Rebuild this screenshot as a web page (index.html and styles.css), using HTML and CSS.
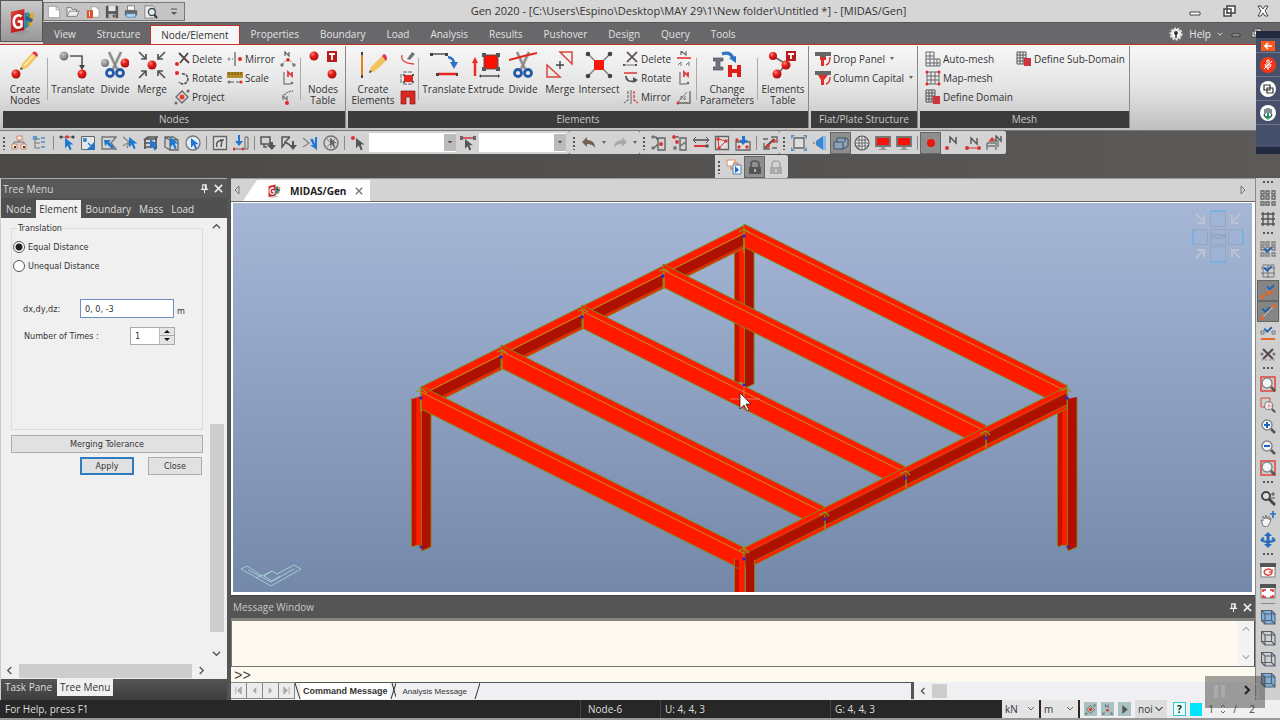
FILE: index.html
```html
<!DOCTYPE html>
<html lang="en">
<head>
<meta charset="utf-8">
<title>Gen 2020</title>
<link rel="stylesheet" href="styles.css">
</head>
<body>
<svg class="defs" aria-hidden="true">
  <defs>
    <radialGradient id="ball" cx="35%" cy="30%" r="75%"><stop offset="0" stop-color="#ff8a80"/><stop offset=".4" stop-color="#e8201c"/><stop offset="1" stop-color="#a30d0d"/></radialGradient>
    <radialGradient id="gball" cx="35%" cy="30%" r="75%"><stop offset="0" stop-color="#c8c8c8"/><stop offset="1" stop-color="#686868"/></radialGradient>
    <linearGradient id="logoRed" x1="0" y1="0" x2="1" y2="1"><stop offset="0" stop-color="#e9423a"/><stop offset="1" stop-color="#a80f12"/></linearGradient>
  </defs>

  <symbol id="logo" viewBox="0 0 28 28">
    <path d="M3 4 17 1 17 23 3 26Z" fill="url(#logoRed)"/>
    <path d="M17 5 20 5 20 20 17 22Z" fill="#2c7fb8"/><path d="M20 4 23 6 22 19 20 20Z" fill="#3f9b4f"/><path d="M23 6 27 5 25 18 22 20Z" fill="#e3a32b"/>
    <path d="M19 8 26 12 24 15 18 12Z" fill="#2b5d8f"/>
    <path d="M3 26 17 23 24 25 10 28Z" fill="#8d8d8d" opacity=".5"/>
    <path d="M14 9C11 6 6 8 6 14s4 8 8 5v-5h-4" fill="none" stroke="#fff" stroke-width="2.6"/>
  </symbol>
  <symbol id="new" viewBox="0 0 16 16"><path d="M1.500 1.500h9l4 4v9h-13z" fill="#fff" stroke="#999"/><path d="M10.500 1.500v4h4" fill="none" stroke="#999"/></symbol>
  <symbol id="open" viewBox="0 0 16 16"><path d="M1 13V3h5l1 2h5v3M1 13l3-6h11l-3 6z" fill="#eee" stroke="#777"/></symbol>
  <symbol id="newred" viewBox="0 0 16 16"><path d="M6 2h5l4 4v8H6z" fill="#fff" stroke="#999"/><path d="M1 6h7v9H1z" fill="#e2502a"/><path d="M4 8v5M3 8h1" stroke="#fff"/></symbol>
  <symbol id="save" viewBox="0 0 16 16"><path d="M1 1h14v14H1z" fill="#565656"/><path d="M4 1h8v6H4z" fill="#e6e6e6"/><path d="M4 10h8v5H4z" fill="#bbb"/><path d="M9 11h2v3H9z" fill="#444"/></symbol>
  <symbol id="print" viewBox="0 0 16 16"><path d="M4 1h8v5H4z" fill="#fff" stroke="#777"/><path d="M1 6h14v6H1z" fill="#666"/><path d="M3 10h10v4H3z" fill="#b9d7ef" stroke="#4a8fc6"/></symbol>
  <symbol id="preview" viewBox="0 0 16 16"><path d="M1 1h9l2 2v12H1z" fill="#eee" stroke="#777"/><circle cx="9" cy="8" r="4" fill="#dfeaf2" stroke="#444" stroke-width="1.500"/><path d="m12 11 3 4" stroke="#333" stroke-width="2"/></symbol>

  <symbol id="pencil" viewBox="0 0 28 28"><circle cx="5" cy="23" r="4.500" fill="url(#ball)"/><path d="M9 19 11 13 21 2 26 6 16 17Z" fill="#f3c35d"/><path d="M13 15 23 4" stroke="#fbe5ab" stroke-width="2"/><path d="m21 2 2-1.500q3 0 4 4L26 6Z" fill="#df3548"/><path d="m9 19 1-3 2 2z" fill="#444"/></symbol>
  <symbol id="translate" viewBox="0 0 28 28"><circle cx="5" cy="5" r="4.500" fill="url(#gball)"/><path d="M11 5h12v10" fill="none" stroke="#555" stroke-width="1.600"/><path d="m20 14 3 5 3-5z" fill="#444"/><circle cx="23" cy="23" r="4.500" fill="url(#ball)"/></symbol>
  <symbol id="scissors" viewBox="0 0 28 28"><path d="M8 1 16 18M20 1 12 18" stroke="#aaa" stroke-width="3"/><path d="M8 1 16 18M20 1 12 18" stroke="#666" stroke-width=".7"/><circle cx="9" cy="22" r="3.500" fill="none" stroke="#245aa5" stroke-width="2.800"/><circle cx="19" cy="22" r="3.500" fill="none" stroke="#245aa5" stroke-width="2.800"/></symbol>
  <symbol id="divide" viewBox="0 0 28 28"><use href="#scissors"/><circle cx="4" cy="12" r="4" fill="url(#gball)"/><circle cx="24" cy="12" r="4.500" fill="url(#ball)"/></symbol>
  <symbol id="edivide" viewBox="0 0 28 28"><use href="#scissors"/><path d="M0 9 15 5 28 2" stroke="#e5261f" stroke-width="2"/></symbol>
  <symbol id="merge" viewBox="0 0 28 28"><g fill="none" stroke="#555" stroke-width="1.700"><path d="m1 1 7 7M8 3v5H3M27 1l-7 7M20 3v5h5M1 27l7-7M3 20h5v5M27 27l-7-7M25 20h-5v5"/></g><circle cx="14" cy="14" r="4.500" fill="url(#ball)"/></symbol>
  <symbol id="ntable" viewBox="0 0 28 28"><circle cx="5" cy="5" r="4.500" fill="url(#ball)"/><path d="M18 0h10v11H18z" fill="#b81c1c"/><path d="M20 3h6M23 3v6" stroke="#fff" stroke-width="1.800"/><circle cx="23" cy="23" r="4.500" fill="url(#ball)"/></symbol>
  <symbol id="ecreate" viewBox="0 0 28 28"><path d="M3 2v24" stroke="#e48325" stroke-width="2"/><path d="M2 1h2v3H2zM2 24h2v3H2z" fill="#444"/><path d="m10 22 2-6 11-11 4 5-11 10Z" fill="#f3c35d"/><path d="m23 5 2-2q3 1 3 5l-1 2z" fill="#df3548"/><path d="m10 22 1-3 2 2z" fill="#444"/></symbol>
  <symbol id="etranslate" viewBox="0 0 28 28"><path d="M1 3h15" stroke="#555" stroke-width="1.500"/><path d="M0 2h3v3H0zM15 2h3v3h-3z" fill="#444"/><path d="M18 6q6 1 6 7" fill="none" stroke="#2c72c7" stroke-width="2.500"/><path d="M20 11h8l-4 7z" fill="#2c72c7"/><path d="M8 23h19" stroke="#e5261f" stroke-width="2.500"/><path d="M6 22h3v3H6zM26 22h2v3h-2z" fill="#444"/></symbol>
  <symbol id="extrude" viewBox="0 0 28 28"><path d="M3 25V11" stroke="#ec2f1c" stroke-width="2.500"/><path d="m0 12 3-6 3 6z" fill="#ec2f1c"/><path d="M12 4h14v14H12z" fill="#fe0d00" stroke="#555"/><path d="M10 2h4v4h-4zM24 2h4v4h-4zM10 16h4v4h-4zM24 16h4v4h-4z" fill="#555"/><path d="M9 25h18" stroke="#555" stroke-width="1.500"/><path d="m9 23-2 2 2 2zM26 23l2 2-2 2z" fill="#444"/></symbol>
  <symbol id="emerge" viewBox="0 0 28 28"><path d="M14 1h12v12zM1 14v12h13z" fill="none" stroke="#d9453d" stroke-width="1.500"/><path d="M14 10v8M10 14h8" stroke="#444" stroke-width="1.400"/></symbol>
  <symbol id="intersect" viewBox="0 0 28 28"><path d="M3 3 25 25M25 3 3 25" stroke="#777" stroke-width="1.300"/><circle cx="3" cy="3" r="2.300" fill="#444"/><circle cx="25" cy="3" r="2.300" fill="#444"/><circle cx="3" cy="25" r="2.300" fill="#444"/><circle cx="25" cy="25" r="2.300" fill="#444"/><path d="M9 9h10v10H9z" fill="#fd1708"/></symbol>
  <symbol id="change" viewBox="0 0 28 28"><path d="M0 7h10v3H7v6h3v3H0v-3h3v-6H0z" fill="#6d737c" stroke="#555" stroke-width=".7"/><path d="M9 3q8-3 11 4" fill="none" stroke="#2c72c7" stroke-width="3"/><path d="m16 7 7-2 0 7z" fill="#2c72c7"/><path d="M15 14h4v4h5v-4h4v12h-4v-4h-5v4h-4z" fill="#e21c17"/></symbol>
  <symbol id="etable" viewBox="0 0 28 28"><path d="M4 5 17 13 8 24" fill="none" stroke="#666" stroke-width="1.500"/><circle cx="4" cy="5" r="4" fill="url(#ball)"/><circle cx="17" cy="14" r="4.500" fill="url(#ball)"/><circle cx="8" cy="23" r="4.500" fill="url(#ball)"/><path d="M17 0h10v10H17z" fill="#b81c1c"/><path d="M19 3h6M22 3v5" stroke="#fff" stroke-width="1.800"/></symbol>

  <symbol id="del" viewBox="0 0 16 16"><circle cx="3" cy="13" r="2" fill="#e5261f"/><path d="M5 2 15 12M14 2 6 12" stroke="#544" stroke-width="1.800"/></symbol>
  <symbol id="rot" viewBox="0 0 16 16"><circle cx="3" cy="3" r="2" fill="#e5261f"/><path d="M8 4a5 5 0 1 1-3 8" fill="none" stroke="#555" stroke-width="1.700" stroke-dasharray="3 1"/></symbol>
  <symbol id="proj" viewBox="0 0 16 16"><path d="M8 2 14 8 8 14 2 8Z" fill="none" stroke="#666" stroke-width="1.300"/><circle cx="8" cy="8" r="2.500" fill="#ee3a22"/><circle cx="14" cy="2" r="1.500" fill="#666"/><circle cx="2" cy="14" r="1.500" fill="#666"/></symbol>
  <symbol id="mir" viewBox="0 0 16 16"><path d="M8 1v14" stroke="#666" stroke-width="1.300"/><circle cx="2" cy="8" r="1.500" fill="#999"/><path d="M5 8h1" stroke="#666"/><circle cx="13" cy="8" r="2" fill="#e5261f"/></symbol>
  <symbol id="scale" viewBox="0 0 16 16"><path d="M0 2h16v6H0z" fill="#b78d2c"/><path d="M2 2v3M5 2v3M8 2v3M11 2v3M14 2v3" stroke="#6b4c0e"/><path d="M1 12h6M9 12h6" stroke="#666"/><circle cx="2" cy="12" r="1.500" fill="#777"/><circle cx="14" cy="12" r="1.500" fill="#e5261f"/></symbol>
  <symbol id="na" viewBox="0 0 16 16"><path d="M5 5V1l4 4V1" fill="none" stroke="#666" stroke-width="1.300"/><path d="m8 7-5 6M8 7l5 6" stroke="#888" stroke-dasharray="2 1"/><circle cx="8" cy="9" r="1.700" fill="#e5261f"/><circle cx="2" cy="14" r="1.700" fill="#777"/><circle cx="14" cy="14" r="1.700" fill="#777"/></symbol>
  <symbol id="nb" viewBox="0 0 16 16"><path d="M4 2v12h7" fill="none" stroke="#888" stroke-width="1.500"/><path d="M8 7V2l4 4V2" fill="none" stroke="#d33" stroke-width="1.700"/><circle cx="12" cy="13" r="1.200" fill="#666"/></symbol>
  <symbol id="nc" viewBox="0 0 16 16"><path d="M3 9q1-6 10-7" fill="none" stroke="#666" stroke-dasharray="2 1" stroke-width="1.300"/><path d="M3 11V7l4 4V7" fill="none" stroke="#777" stroke-width="1.300"/><circle cx="7" cy="14" r="2" fill="#e5261f"/></symbol>
  <symbol id="curve" viewBox="0 0 16 16"><path d="M2 4q-2 8 12 9" fill="none" stroke="#d8433c" stroke-width="1.300"/><path d="m7 8 5-7 3 2-5 6z" fill="#777"/></symbol>
  <symbol id="ebox" viewBox="0 0 16 16"><path d="M4 5h9v7H4z" fill="#e5261f"/><path d="M3 2h10M3 14h10M1 4v9" stroke="#666" stroke-dasharray="4 1"/><path d="M3 4h2v2H3zM12 4h2v2h-2zM3 11h2v2H3zM12 11h2v2h-2z" fill="#555"/></symbol>
  <symbol id="arch" viewBox="0 0 16 16"><path d="M1 2h14v13h-5V8H6v7H1z" fill="#d92922" stroke="#8e1712" stroke-width=".7"/></symbol>
  <symbol id="edel" viewBox="0 0 16 16"><path d="m4 1 10 10M14 1 4 11" stroke="#544" stroke-width="1.700"/><path d="M1 14h12" stroke="#777"/><path d="M0 13h2v2H0zM12 13h2v2h-2z" fill="#555"/></symbol>
  <symbol id="erot" viewBox="0 0 16 16"><path d="M1 3h13" stroke="#d33" stroke-width="1.500"/><path d="M3 6q0 7 10 5" fill="none" stroke="#555" stroke-width="1.700"/><path d="M10 7v6l5-3z" fill="#555"/></symbol>
  <symbol id="emir" viewBox="0 0 16 16"><path d="M8 1v14" stroke="#666"/><path d="M5 2v9L1 14" stroke="#777" fill="none" stroke-dasharray="3 1" stroke-width="1.300"/><path d="M11 2v9l4 3" stroke="#d33" fill="none" stroke-dasharray="3 1" stroke-width="1.300"/></symbol>
  <symbol id="ea" viewBox="0 0 16 16"><path d="M5 4V0l5 4V0" fill="none" stroke="#666" stroke-width="1.200"/><path d="M1 7h14" stroke="#e5261f" stroke-width="1.500"/><path d="m2 14 3-3v4M10 14l3-3v4" fill="none" stroke="#777"/></symbol>
  <symbol id="ec" viewBox="0 0 16 16"><path d="M1 14h13V2" fill="none" stroke="#666" stroke-width="1.300"/><path d="m2 13 9-10M5 11V7l4 4V7" fill="none" stroke="#777"/><circle cx="2" cy="14" r="1.500" fill="#d33"/></symbol>
  <symbol id="drop" viewBox="0 0 16 16"><path d="M0 1h16v4h-5v1H5V5H0z" fill="#666"/><path d="M5 6h6v3H9v6H6V9H5z" fill="#df2f28"/><path d="M15 6q0 7-4 8" fill="none" stroke="#df2f28" stroke-width="1.400"/></symbol>
  <symbol id="capital" viewBox="0 0 16 16"><path d="M0 1h16v4H0z" fill="#666"/><path d="M3 5h10l-4 5v5H6v-5z" fill="#df2f28"/><path d="M15 7q0 6-4 7" fill="none" stroke="#df2f28" stroke-width="1.400"/></symbol>
  <symbol id="amesh" viewBox="0 0 16 16"><path d="M1 1h8v7h6v7H1zM5 1v14M1 5h8M1 8h8M1 12h14M9 8v7M12 8v7" fill="none" stroke="#666"/></symbol>
  <symbol id="mmesh" viewBox="0 0 16 16"><path d="M2 2h12v12H2zM6 2v12M10 2v12M2 6h12M2 10h12" fill="none" stroke="#666"/><g fill="#e5262c"><circle cx="2" cy="2" r="1.500"/><circle cx="14" cy="2" r="1.500"/><circle cx="2" cy="14" r="1.500"/><circle cx="14" cy="14" r="1.500"/></g></symbol>
  <symbol id="dmesh" viewBox="0 0 16 16"><path d="M1 1h9v12H1zM4 1v12M7 1v12M1 4h9M1 7h9M1 10h9" fill="none" stroke="#555"/><path d="M8 7h7v8H8z" fill="#cf3440"/></symbol>

  <symbol id="cur" viewBox="0 0 16 16"><path d="M0 0v11l3-3 2 5 2-1-2-5h4z"/></symbol>
  <symbol id="b1" viewBox="0 0 16 16"><path d="M6 1h5v4H6zM1 9h5v5H1zM10 9h5v5h-5z" fill="#f6efe8" stroke="#d9825d"/><path d="M8 5v3M3 9V7h10v2" stroke="#777" fill="none"/><path d="M3 11h2v2H3zM12 11h2v2h-2z" fill="#333"/></symbol>
  <symbol id="b2" viewBox="0 0 16 16"><path d="M3 2v11h5M3 4h5M3 8h5" fill="none" stroke="#777"/><g fill="none" stroke="#4c8fca" stroke-width="1.300"><circle cx="3" cy="3" r="1.700"/><path d="M9 3h4M9 7h4M9 12h4"/></g></symbol>
  <symbol id="b3" viewBox="0 0 16 16"><path d="M2 2h12" stroke="#777"/><circle cx="2" cy="2" r="1.600" fill="#444"/><circle cx="8" cy="2" r="1.800" fill="#d33"/><circle cx="14" cy="2" r="1.600" fill="#444"/><use href="#cur" x="6" y="3" width="15" height="15" fill="#1d77d3"/></symbol>
  <symbol id="b4" viewBox="0 0 16 16"><path d="M1.500 1.500h13v13h-13z" fill="#e6e6e6" stroke="#666"/><path d="m3 3 3 3M6 3v3H3M14 14 8 8M14 8v6H8z" stroke="#1d77d3" fill="#1d77d3" stroke-width="1.300"/></symbol>
  <symbol id="b5" viewBox="0 0 16 16"><path d="M15 2H1v12h14l-5-6z" fill="none" stroke="#777" stroke-width="1.400"/><path d="M3 5h7L8 7l5 5-2 2-5-5-2 2z" fill="#1d77d3"/></symbol>
  <symbol id="b6" viewBox="0 0 16 16"><path d="m1 2 6 5-6 4M7 7l-2 6" fill="none" stroke="#888" stroke-width="1.400"/><use href="#cur" x="7" y="2" width="15" height="15" fill="#1d77d3"/></symbol>
  <symbol id="b7" viewBox="0 0 16 16"><path d="M2 4h12M1 8h12M2 12h12M2 4v10M13 2v12M1 5l4-3h10" fill="none" stroke="#555" stroke-width="1.700"/><use href="#cur" x="7" y="4" width="14" height="14" fill="#1d77d3"/></symbol>
  <symbol id="b8" viewBox="0 0 16 16"><path d="M1 2h8l5 3v10H6l-5-3zM1 2l5 3h8M6 5v10" fill="none" stroke="#666" stroke-width="1.300"/><use href="#cur" x="6" y="2" width="15" height="15" fill="#1d77d3"/></symbol>
  <symbol id="b9" viewBox="0 0 16 16"><circle cx="8" cy="8" r="7" fill="#e4edf5" stroke="#777" stroke-width="1.300"/><use href="#cur" x="6" y="3" width="14" height="14" fill="#1d77d3"/></symbol>
  <symbol id="b10" viewBox="0 0 16 16"><path d="M1.500 1.500h13v13h-13z" fill="#ddd" stroke="#666" stroke-width="1.300"/><path d="M5 12q-2-6 5-7M10 5 9 12M8 5h4" fill="none" stroke="#555" stroke-width="1.500"/></symbol>
  <symbol id="b11" viewBox="0 0 16 16"><path d="M5 0v6H2l4 5 4-5H7V0z" fill="#1d77d3"/><path d="M1 14h10M12 2h3v12h-3z" stroke="#666" fill="none"/><circle cx="1" cy="14" r="1.500" fill="#d33"/><circle cx="10" cy="14" r="1.500" fill="#d33"/></symbol>
  <symbol id="b12" viewBox="0 0 16 16"><path d="M1 2h9v7H1zM4 9v3h3" fill="none" stroke="#555" stroke-width="1.500"/><path d="M10 7v3H7l5 5 4-5h-3V7z" fill="#555"/></symbol>
  <symbol id="b13" viewBox="0 0 16 16"><path d="M9 2H1v10l4-5M9 2 4 7l5 3" fill="none" stroke="#555" stroke-width="1.500"/><path d="M11 6v4H8l4 5 4-5h-3V6z" fill="#555"/></symbol>
  <symbol id="b14" viewBox="0 0 16 16"><path d="m1 3 6 5-6 4" fill="none" stroke="#888" stroke-width="1.400"/><path d="M8 4h3l2 5V2h2v13l-7-5h3z" fill="#1d77d3"/></symbol>
  <symbol id="b15" viewBox="0 0 16 16"><circle cx="8" cy="8" r="7" fill="none" stroke="#777" stroke-width="1.500"/><path d="m3 3 10 10M4 12 12 4M8 3v10" stroke="#888"/><use href="#cur" x="7" y="3" width="12" height="12" fill="#666"/></symbol>
  <symbol id="b16" viewBox="0 0 16 16"><circle cx="3" cy="3" r="2" fill="#d33"/><use href="#cur" x="6" y="3" width="15" height="15" fill="#555"/></symbol>
  <symbol id="b17" viewBox="0 0 16 16"><path d="M2 3h12" stroke="#d33" stroke-width="1.500"/><path d="M0 1h3v4H0zM13 1h3v4h-3z" fill="#666"/><use href="#cur" x="5" y="4" width="14" height="14" fill="#555"/></symbol>
  <symbol id="undo" viewBox="0 0 16 16"><path d="m1 7 5-5v3q8 0 8 8-2-4-8-4v3z" fill="#76604f"/></symbol>
  <symbol id="redo" viewBox="0 0 16 16"><path d="m15 7-5-5v3Q2 5 2 13q2-4 8-4v3z" fill="#aaa"/></symbol>
  <symbol id="c1" viewBox="0 0 16 16"><path d="M7 3h7v12H7zM1 2h4l2 4M2 14l5-5" fill="none" stroke="#666" stroke-width="1.400"/><circle cx="2" cy="2" r="1.700" fill="#777"/><circle cx="2" cy="13" r="1.700" fill="#777"/><circle cx="10" cy="9" r="2" fill="#d33"/></symbol>
  <symbol id="c2" viewBox="0 0 16 16"><path d="M8 3h6v12H8zM8 11l6-4M2 2h5" fill="none" stroke="#666" stroke-width="1.400"/><circle cx="2" cy="2" r="1.900" fill="#d33"/><circle cx="5" cy="7" r="1.900" fill="#d33"/><circle cx="3" cy="13" r="1.900" fill="#777"/></symbol>
  <symbol id="c3" viewBox="0 0 16 16"><path d="M1 5h14" stroke="#555" stroke-width="1.600"/><path d="m3 2-3 3 3 3M13 2l3 3-3 3" fill="none" stroke="#555"/><path d="M1 11h12" stroke="#d33" stroke-width="2"/><circle cx="14" cy="11" r="1.800" fill="#555"/></symbol>
  <symbol id="c4" viewBox="0 0 16 16"><path d="M1.500 1.500h13v13h-13z" fill="#ddd" stroke="#666" stroke-width="1.300"/><path d="m4 4 8 2-7 7z" fill="none" stroke="#d33"/><g fill="#d33"><circle cx="4" cy="4" r="1.700"/><circle cx="12" cy="6" r="1.700"/><circle cx="5" cy="13" r="1.700"/></g></symbol>
  <symbol id="c5" viewBox="0 0 16 16"><path d="M1 7h14v8H1z" fill="#ddd" stroke="#666" stroke-width="1.300"/><path d="M7 1v4H4l4 5 5-5h-3V1z" fill="#1d77d3"/><g fill="#d33"><circle cx="2" cy="5" r="1.700"/><circle cx="4" cy="12" r="1.700"/><circle cx="12" cy="12" r="1.700"/></g></symbol>
  <symbol id="c6" viewBox="0 0 16 16"><path d="M9 2h6v6M2 8v6h6M1 4h5M10 13h5" fill="none" stroke="#666" stroke-width="1.400"/><path d="m3 13 9-9" stroke="#555" stroke-width="2"/><circle cx="6" cy="11" r="1.900" fill="#d33"/><circle cx="12" cy="6" r="1.900" fill="#d33"/></symbol>
  <symbol id="d1" viewBox="0 0 16 16"><path d="M3 3h10v10H3z" fill="#ddd" stroke="#666" stroke-width="1.300"/><g fill="#5b8dc4"><path d="M0 0h4L0 4zM16 0h-4l4 4zM0 16h4l-4-4zM16 16h-4l4-4z"/></g></symbol>
  <symbol id="d2" viewBox="0 0 16 16"><path d="M11 1v14L4 10V6z" fill="#3c86cf"/><path d="M11 1h3v14h-3z" fill="#8ab8e4"/><path d="M1 7h2v2H1z" fill="#999"/></symbol>
  <symbol id="d3" viewBox="0 0 16 16"><path d="M1 7h9v7H1zM4 7V3h8v4M10 14l5-3V4l-3-1" fill="#8ea3b8" stroke="#3d5267"/></symbol>
  <symbol id="d4" viewBox="0 0 16 16"><circle cx="8" cy="8" r="7" fill="#eee" stroke="#555" stroke-width="1.200"/><path d="M1 8h14M2 5h12M2 11h12M8 1v14M5 2v12M11 2v12" stroke="#666" fill="none"/></symbol>
  <symbol id="d5" viewBox="0 0 16 16"><path d="M0 1h16v11H0z" fill="#777"/><path d="M2 3h12v7H2z" fill="#f2140c"/><path d="M6 12h4v2h2v1H4v-1h2z" fill="#999"/></symbol>
  <symbol id="e1" viewBox="0 0 16 16"><circle cx="8" cy="8" r="4" fill="#ec1610"/></symbol>
  <symbol id="e2" viewBox="0 0 16 16"><circle cx="3" cy="13" r="2" fill="#d33"/><path d="M6 8V2l6 6V2" fill="none" stroke="#555" stroke-width="1.500"/></symbol>
  <symbol id="e3" viewBox="0 0 16 16"><path d="M1 13h14" stroke="#d33"/><circle cx="2" cy="13" r="2" fill="#d33"/><circle cx="14" cy="13" r="2" fill="#d33"/><path d="M6 9V3l6 6V3" fill="none" stroke="#555" stroke-width="1.400"/></symbol>
  <symbol id="e4" viewBox="0 0 16 16"><path d="M1 8h9v7M1 8v7M1 11h8M4 6h8v6" fill="none" stroke="#777" stroke-width="1.400"/><path d="m2 7 4-5 3 3z" fill="#d33"/><path d="M10 6V1l5 5V1" fill="none" stroke="#555" stroke-width="1.400"/></symbol>
  <symbol id="f1" viewBox="0 0 16 16"><path d="M1 1h8v6H1z" fill="#fff" stroke="#e08a64"/><path d="M7 4h5v6H5V7" fill="#f6d2bd" stroke="#c96c45"/><path d="M7 6h8v9H7z" fill="#eef5fb" stroke="#5580ab"/><path d="m9 7 4 4-4 3z" fill="#1d65c0"/></symbol>
  <symbol id="lock" viewBox="0 0 16 16"><path d="M4 8V5q0-3 4-3t4 3v3" fill="none" stroke="currentColor" stroke-width="1.700"/><path d="M2 8h12v7H2z" fill="currentColor"/><path d="M8 10v3" stroke="#ddd" stroke-width="1.400"/></symbol>
  <symbol id="pin" viewBox="0 0 10 10"><path d="M3 1h4v5H3zM1 6h8M5 6v4M6 1v5" fill="none" stroke="currentColor" stroke-width="1.200"/></symbol>
  <symbol id="x" viewBox="0 0 10 10"><path d="m1 1 8 8M9 1 1 9" stroke="currentColor" stroke-width="1.700"/></symbol>
  <symbol id="up" viewBox="0 0 10 10"><path d="m1 7 4-4 4 4" fill="none" stroke="currentColor" stroke-width="1.500"/></symbol>
  <symbol id="down" viewBox="0 0 10 10"><path d="m1 3 4 4 4-4" fill="none" stroke="currentColor" stroke-width="1.500"/></symbol>
  <symbol id="left" viewBox="0 0 10 10"><path d="M7 1 3 5l4 4" fill="none" stroke="currentColor" stroke-width="1.500"/></symbol>
  <symbol id="right" viewBox="0 0 10 10"><path d="m3 1 4 4-4 4" fill="none" stroke="currentColor" stroke-width="1.500"/></symbol>

  <symbol id="g9" viewBox="0 0 16 16"><path d="M1 1h3v3H1zM6 1h3v3H6zM12 1h3v3h-3zM1 6h3v3H1zM6 6h3v3H6zM12 6h3v3h-3zM1 12h3v3H1zM6 12h3v3H6zM12 12h3v3h-3z" fill="none" stroke="#666" stroke-width="1.300"/></symbol>
  <symbol id="hash" viewBox="0 0 16 16"><path d="M3 1v14M8 1v14M13 1v14M1 3h14M1 8h14M1 13h14" fill="none" stroke="#555" stroke-width="1.400"/></symbol>
  <symbol id="chk" viewBox="0 0 16 16"><path d="m3 5 4 4 6-6" fill="none" stroke="#2163b5" stroke-width="2.500"/></symbol>
  <symbol id="r3" viewBox="0 0 16 16"><use href="#g9" opacity=".75"/><use href="#chk" x="2" y="4" width="12" height="12"/></symbol>
  <symbol id="r4" viewBox="0 0 16 16"><path d="M3 3h11v12H3zM1 6h14M1 11h14M8 3v13" fill="none" stroke="#777"/><use href="#chk" x="2" y="2" width="12" height="12"/></symbol>
  <symbol id="r5" viewBox="0 0 16 16"><path d="m1 14 7-4 7-2" stroke="#e36a28" stroke-width="1.500"/><circle cx="2" cy="14" r="2" fill="#e36a28"/><circle cx="9" cy="10" r="2" fill="#e36a28"/><use href="#chk" x="5" width="11" height="11"/></symbol>
  <symbol id="r6" viewBox="0 0 16 16"><path d="m1 15 13-13" stroke="#c8c8c8"/><circle cx="14" cy="2" r="2" fill="#e36a28"/><circle cx="2" cy="14" r="2" fill="#e36a28"/><use href="#chk" width="12" height="12" y="1"/></symbol>
  <symbol id="r7" viewBox="0 0 16 16"><path d="M1 6h3v3H1zM12 6h3v3h-3z" fill="none" stroke="#777"/><path d="M1 14h14" stroke="#e36a28" stroke-width="2"/><use href="#chk" x="2" width="12" height="12"/></symbol>
  <symbol id="r8" viewBox="0 0 16 16"><path d="m3 3 10 10M13 3 3 13" stroke="#554b48" stroke-width="2"/><circle cx="2" cy="8" r="1.500" fill="#777"/><circle cx="14" cy="8" r="1.500" fill="#777"/><path d="M1 14h14" stroke="#888" stroke-dasharray="2 2"/></symbol>
  <symbol id="mag" viewBox="0 0 16 16"><circle cx="7" cy="7" r="5" fill="#f3f5f5" stroke="#888" stroke-width="1.500"/><path d="m11 11 4 4" stroke="#555" stroke-width="2.500"/></symbol>
  <symbol id="z1" viewBox="0 0 16 16"><path d="M1 1h14v14H1z" fill="none" stroke="#e04540" stroke-width="1.500"/><use href="#mag"/></symbol>
  <symbol id="z2" viewBox="0 0 16 16"><path d="M1 1h9v9H1z" fill="none" stroke="#e04540"/><use href="#mag" x="3" y="3" width="13" height="13"/><path d="M9 6v6M7 9h5" stroke="#e7918f"/></symbol>
  <symbol id="z3" viewBox="0 0 16 16"><use href="#mag"/><path d="M7 4v6M4 7h6" stroke="#1d65c0" stroke-width="2"/></symbol>
  <symbol id="z4" viewBox="0 0 16 16"><use href="#mag"/><path d="M4 7h6" stroke="#1d65c0" stroke-width="2"/></symbol>
  <symbol id="z6" viewBox="0 0 16 16"><circle cx="6" cy="6" r="4" fill="#ddd" stroke="#444" stroke-width="2"/><path d="m9 9 6 6" stroke="#444" stroke-width="3"/><path d="M11 4h4M13 2v4M11 8h4" stroke="#555"/></symbol>
  <symbol id="hand" viewBox="0 0 16 16"><path d="M3 15 1 9l2 1V5l2 3 1-4 1 4 2-3v4l2-2-1 5-3 4z" fill="#f4f4f4" stroke="#777"/><path d="M13 0v7M10 3h6" stroke="#2d73c4" stroke-width="1.700"/></symbol>
  <symbol id="orb" viewBox="0 0 16 16"><path d="M8 2v12" stroke="#286bbd" stroke-width="3"/><path d="M4 6q-6 3 4 4 10-1 4-4" fill="none" stroke="#286bbd" stroke-width="2.400"/><path d="m4 4 4-4 4 4zM4 12l4 4 4-4z" fill="#286bbd"/></symbol>
  <symbol id="w1" viewBox="0 0 16 16"><path d="M1 2h14v13H1z" fill="#fff" stroke="#777"/><path d="M0 1h16v4H0z" fill="#555"/><path d="M11 8a4 3 0 1 0 1 3M12 7v3H9" fill="none" stroke="#e04540" stroke-width="1.500"/></symbol>
  <symbol id="w2" viewBox="0 0 16 16"><path d="M1 2h14v13H1z" fill="#fff" stroke="#777"/><path d="M0 1h16v4H0z" fill="#555"/><path d="M3 9V7h3M10 7h3v2M3 12v2h3M10 14h3v-2" fill="none" stroke="#d22" stroke-width="1.500"/></symbol>
  <symbol id="cube" viewBox="0 0 16 16"><path d="M1.500 1.500h10v10h-10zM5 5h10v10H5zM1.500 1.500 5 5M11.500 1.500 15 5M11.500 11.500 15 15M1.500 11.500 5 15" fill="none" stroke="#56616e" stroke-width="1.100"/></symbol>
  <symbol id="cubeb" viewBox="0 0 16 16"><path d="M2 2h9l4 3v10H5l-3-4z" fill="#7fb0dc"/><use href="#cube"/></symbol>
</svg>

<div class="app">
  <header class="head">
    <button class="appbtn" aria-label="Application menu"><svg><use href="#logo"/></svg></button>
    <div class="titlebar">
      <div class="quick">
        <button aria-label="New"><svg class="i"><use href="#new"/></svg></button><button aria-label="Open"><svg class="i"><use href="#open"/></svg></button><button aria-label="Recent"><svg class="i"><use href="#newred"/></svg></button><button aria-label="Save"><svg class="i"><use href="#save"/></svg></button><button aria-label="Print"><svg class="i"><use href="#print"/></svg></button><button aria-label="Preview"><svg class="i"><use href="#preview"/></svg></button>
        <button class="more" aria-label="Customize"><svg viewBox="0 0 8 8"><path d="M1 1h6" stroke="#555"/><path d="M1 4h6L4 7z" fill="#555"/></svg></button>
      </div>
      <h1 class="title">Gen 2020 - [C:\Users\Espino\Desktop\MAY 29\1\New folder\Untitled *] - [MIDAS/Gen]</h1>
      <div class="winctl">
        <button aria-label="Minimize"><svg viewBox="0 0 14 14"><path d="M2 8h10v3H2z" fill="#fff" stroke="#444"/></svg></button>
        <button aria-label="Restore"><svg viewBox="0 0 14 14"><path d="M5 2h8v7H5zM2 5h7v7H2z" fill="#fff" stroke="#444" stroke-width="1.500"/><path d="M4 8h3v2H4z" fill="#555"/></svg></button>
        <button aria-label="Close"><svg viewBox="0 0 14 14"><path d="M2 2h3l2 3 2-3h3L9 7l3 5H9L7 9l-2 3H2l3-5z" fill="#fff" stroke="#444"/></svg></button>
      </div>
    </div>
    <nav class="tabs">
      <button>View</button><button>Structure</button><button class="on">Node/Element</button><button>Properties</button><button>Boundary</button><button>Load</button><button>Analysis</button><button>Results</button><button>Pushover</button><button>Design</button><button>Query</button><button>Tools</button>
      <div class="help"><svg viewBox="0 0 14 14"><circle cx="7" cy="7" r="5" fill="#fff" stroke="#ddd" stroke-width="3" stroke-dasharray="2 1"/><circle cx="7" cy="6" r="2" fill="#333"/><path d="M7 6v5" stroke="#333" stroke-width="1.500"/></svg><button>Help</button><svg class="tiny"><use href="#down"/></svg><svg viewBox="0 0 14 14"><path d="M3 7h8v2H3z" fill="#ddd" stroke="#333"/></svg><svg viewBox="0 0 14 14"><path d="M5 2h7v6H5zM3 4h7v6H3z" fill="#fff" stroke="#444"/></svg></div>
    </nav>
  </header>

  <section class="ribbon">
    <div class="group">
      <div class="gbody">
        <button class="tool w44"><svg><use href="#pencil"/></svg>Create<br>Nodes</button><i class="vsep"></i>
        <button class="tool w50"><svg><use href="#translate"/></svg>Translate</button>
        <button class="tool w34"><svg><use href="#divide"/></svg>Divide</button>
        <button class="tool w40"><svg><use href="#merge"/></svg>Merge</button>
        <div class="col w53"><button><svg class="i"><use href="#del"/></svg>Delete</button><button><svg class="i"><use href="#rot"/></svg>Rotate</button><button><svg class="i"><use href="#proj"/></svg>Project</button></div>
        <div class="col w53"><button><svg class="i"><use href="#mir"/></svg>Mirror</button><button><svg class="i"><use href="#scale"/></svg>Scale</button></div>
        <div class="col w22"><button aria-label="Renumber"><svg class="i"><use href="#na"/></svg></button><button aria-label="Start number"><svg class="i"><use href="#nb"/></svg></button><button aria-label="Compact"><svg class="i"><use href="#nc"/></svg></button></div><i class="vsep"></i>
        <button class="tool w44"><svg><use href="#ntable"/></svg>Nodes<br>Table</button>
      </div>
      <div class="glabel">Nodes</div>
    </div>
    <div class="group">
      <div class="gbody">
        <button class="tool w50"><svg><use href="#ecreate"/></svg>Create<br>Elements</button>
        <div class="col w20"><button aria-label="Curve"><svg class="i"><use href="#curve"/></svg></button><button aria-label="Line"><svg class="i"><use href="#ebox"/></svg></button><button aria-label="Frame"><svg class="i"><use href="#arch"/></svg></button></div><i class="vsep"></i>
        <button class="tool w50"><svg><use href="#etranslate"/></svg>Translate</button>
        <button class="tool w34"><svg><use href="#extrude"/></svg>Extrude</button>
        <button class="tool w40"><svg><use href="#edivide"/></svg>Divide</button>
        <button class="tool w34"><svg><use href="#emerge"/></svg>Merge</button>
        <button class="tool w44"><svg><use href="#intersect"/></svg>Intersect</button>
        <div class="col w53"><button><svg class="i"><use href="#edel"/></svg>Delete</button><button><svg class="i"><use href="#erot"/></svg>Rotate</button><button><svg class="i"><use href="#emir"/></svg>Mirror</button></div>
        <div class="col w22"><button aria-label="Renumber"><svg class="i"><use href="#ea"/></svg></button><button aria-label="Start number"><svg class="i"><use href="#nb"/></svg></button><button aria-label="Compact"><svg class="i"><use href="#ec"/></svg></button></div><i class="vsep"></i>
        <button class="tool w60"><svg><use href="#change"/></svg>Change<br>Parameters</button><i class="vsep"></i>
        <button class="tool w50"><svg><use href="#etable"/></svg>Elements<br>Table</button>
      </div>
      <div class="glabel">Elements</div>
    </div>
    <div class="group">
      <div class="gbody">
        <div class="col w106"><button><svg class="i"><use href="#drop"/></svg>Drop Panel<b class="caret"></b></button><button><svg class="i"><use href="#capital"/></svg>Column Capital<b class="caret"></b></button></div>
      </div>
      <div class="glabel">Flat/Plate Structure</div>
    </div>
    <div class="group">
      <div class="gbody mesh">
        <div class="col w91"><button><svg class="i"><use href="#amesh"/></svg>Auto-mesh</button><button><svg class="i"><use href="#mmesh"/></svg>Map-mesh</button><button><svg class="i"><use href="#dmesh"/></svg>Define Domain</button></div>
        <div class="col w115"><button><svg class="i"><use href="#dmesh"/></svg>Define Sub-Domain</button></div>
      </div>
      <div class="glabel">Mesh</div>
    </div>
  </section>

  <div class="bars">
    <div class="bar">
      <i class="grip"></i><button><svg class="i"><use href="#b1"/></svg></button><button><svg class="i"><use href="#b2"/></svg></button><i class="bsep"></i><button><svg class="i"><use href="#b3"/></svg></button><button><svg class="i"><use href="#b4"/></svg></button><button><svg class="i"><use href="#b5"/></svg></button><button><svg class="i"><use href="#b6"/></svg></button><button><svg class="i"><use href="#b7"/></svg></button><button><svg class="i"><use href="#b8"/></svg></button><button><svg class="i"><use href="#b9"/></svg></button><i class="bsep"></i><button><svg class="i"><use href="#b10"/></svg></button><button><svg class="i"><use href="#b11"/></svg></button><i class="bsep"></i><button><svg class="i"><use href="#b12"/></svg></button><button><svg class="i"><use href="#b13"/></svg></button><button><svg class="i"><use href="#b14"/></svg></button><button><svg class="i"><use href="#b15"/></svg></button><i class="bsep"></i><button><svg class="i"><use href="#b16"/></svg></button><span class="combo"><select aria-label="Select node"><option></option></select></span><button><svg class="i"><use href="#b17"/></svg></button><span class="combo"><select aria-label="Select element"><option></option></select></span>
    </div>
    <div class="bar"><i class="grip"></i><button><svg class="i"><use href="#undo"/></svg></button><b class="caret"></b><button><svg class="i"><use href="#redo"/></svg></button><b class="caret"></b></div>
    <div class="bar"><i class="grip"></i><button><svg class="i"><use href="#c1"/></svg></button><button><svg class="i"><use href="#c2"/></svg></button><button><svg class="i"><use href="#c3"/></svg></button><button><svg class="i"><use href="#c4"/></svg></button><button><svg class="i"><use href="#c5"/></svg></button><i class="bsep"></i><button><svg class="i"><use href="#c6"/></svg></button></div>
    <div class="bar"><i class="grip"></i><button><svg class="i"><use href="#d1"/></svg></button><button><svg class="i"><use href="#d2"/></svg></button><button class="on"><svg class="i"><use href="#d3"/></svg></button><button><svg class="i"><use href="#d4"/></svg></button><button><svg class="i"><use href="#d5"/></svg></button><button><svg class="i"><use href="#d5"/></svg></button><i class="bsep"></i><button class="on"><svg class="i"><use href="#e1"/></svg></button><button><svg class="i"><use href="#e2"/></svg></button><button><svg class="i"><use href="#e3"/></svg></button><button><svg class="i"><use href="#e4"/></svg></button></div>
  </div>
  <div class="bars second">
    <div class="bar"><i class="grip"></i><button><svg class="i"><use href="#f1"/></svg></button><button class="on dark"><svg class="i"><use href="#lock"/></svg></button><button class="pale"><svg class="i"><use href="#lock"/></svg></button></div>
  </div>

  <main class="work">
    <aside class="tree">
      <div class="ptitle"><span>Tree Menu</span><svg><use href="#pin"/></svg><svg><use href="#x"/></svg></div>
      <nav class="ptabs"><button>Node</button><button class="on">Element</button><button>Boundary</button><button>Mass</button><button>Load</button></nav>
      <div class="pbody">
        <form class="form">
          <fieldset>
            <legend>Translation</legend>
            <label class="radio"><input type="radio" name="dist" checked>Equal Distance</label>
            <label class="radio"><input type="radio" name="dist">Unequal Distance</label>
            <div class="frow first"><label for="dxyz">dx,dy,dz:</label><input id="dxyz" type="text" value="0, 0, -3"><span class="unit">m</span></div>
            <div class="frow"><label for="times">Number of Times :</label><span class="spin"><input id="times" type="text" value="1"><span><button type="button" aria-label="More"><b class="tri up"></b></button><button type="button" aria-label="Less"><b class="tri"></b></button></span></span></div>
          </fieldset>
          <button type="button" class="btn wide">Merging Tolerance</button>
          <div class="actions"><button type="button" class="btn prim">Apply</button><button type="button" class="btn">Close</button></div>
        </form>
        <div class="vscroll"><svg><use href="#up"/></svg><i></i><svg><use href="#down"/></svg></div>
        <div class="hscroll"><svg><use href="#left"/></svg><i></i><svg><use href="#right"/></svg></div>
      </div>
      <nav class="pfoot"><button>Task Pane</button><button class="on">Tree Menu</button></nav>
    </aside>

    <section class="center">
      <div class="doctabs">
        <svg class="nav" viewBox="0 0 10 10"><path d="M7 1v8L3 5z" fill="none" stroke="#777"/></svg>
        <div class="doctab"><svg class="i"><use href="#logo"/></svg><span>MIDAS/Gen</span><svg class="cx"><use href="#x"/></svg></div>
        <svg class="nav end" viewBox="0 0 10 10"><path d="M3 1v8l4-4z" fill="none" stroke="#777"/></svg>
      </div>
      <div class="view">
        <svg class="scene" viewBox="233 203 1019 389" preserveAspectRatio="xMidYMid slice" role="img" aria-label="Steel frame model">
          <defs>
            <g id="beam"><path d="M0-12 323 149.500V172.500L0 11Z" fill="#ff1a00" stroke="#7d8a1c"/><path d="M0-6 323 155.500" stroke="#c8901c"/></g>
            <linearGradient id="flange"><stop offset="0" stop-color="#c41300"/><stop offset=".4" stop-color="#c41300"/><stop offset=".55" stop-color="#ff1a00"/><stop offset="1" stop-color="#ff1a00"/></linearGradient>
            <g id="col"><path d="M-9 1 0-2V149L-4 147-9 149Z" fill="url(#flange)"/><path d="M0 1 10-1V149L1 153 0 150Z" fill="#ad0f00"/><path d="M-9.500 0V148M10 1V149M.5 0V152" stroke="#8a7a16"/><path d="M-9 149-4 147 0 148 1 153 10 149" fill="none" stroke="#7d8a1c"/></g>
          </defs>
          <use href="#col" x="744" y="235"/>
          <use href="#col" x="421" y="398"/>
          <use href="#col" x="1067" y="398"/>
          <path d="M421 387 744 225.500V248L421 410Z" fill="#ff1a00" stroke="#7d8a1c"/>
          <path d="M425 393 744 233.500V245.500L425 405Z" fill="#ad0f00" stroke="#a05b12" stroke-width=".7"/>
          <path d="M421 395 744 233.500" stroke="#c8901c"/>
          <use href="#beam" x="744" y="236"/><use href="#beam" x="663" y="276"/><use href="#beam" x="582" y="317"/><use href="#beam" x="501" y="357"/><use href="#beam" x="421" y="398"/>
          <path d="M744 548 1067 386.500V408.500L744 570Z" fill="#ff1a00" stroke="#7d8a1c"/>
          <path d="M744 554 1067 392.500V404.500L744 566Z" fill="#ad0f00" stroke="#b07418" stroke-width=".8"/>
          <g><path d="M735 560h4v40h-4z" fill="#c41300"/><path d="M739 560h6v40h-6z" fill="#ff1a00"/><path d="M746 563 754 560V600H746Z" fill="#ad0f00"/><path d="M734.500 558V600M745 550V600M754.500 560V600M735 568h4" stroke="#8a7a16"/></g>
          <g stroke="#8a9a20" fill="none" stroke-width="1.300"><path d="M744 232V253M664 272V288M583 312V328M502 353V369M421 394V412M825 515V529M906 474V488M986 434V448M739 232l5-3 6 4M416 392l6-3 5 4M659 271l6-2 4 3M578 311l6-2 4 3M497 352l6-2 4 3M819 515l6-3 4 4M900 474l6-3 4 4M980 434l6-3 4 4M1061 391l6-3 4 4M739 551l5-3 5 5"/></g>
          <g fill="#3422c9"><circle cx="744" cy="236" r="1.700"/><circle cx="663" cy="276" r="1.700"/><circle cx="582" cy="317" r="1.700"/><circle cx="501" cy="357" r="1.700"/><circle cx="421" cy="398" r="1.700"/><circle cx="1067" cy="398" r="1.700"/><circle cx="986" cy="438" r="1.700"/><circle cx="905" cy="478" r="1.700"/><circle cx="825" cy="519" r="1.700"/><circle cx="744" cy="559" r="1.700"/><circle cx="421" cy="547" r="1.500"/><circle cx="1068" cy="547" r="1.500"/><circle cx="744" cy="385" r="1.500"/></g>
          <path d="M730 399h30M744 386v26" stroke="#d88b70" stroke-width=".8"/>
          <path d="M740 393v16l4-4 3 6 2-1-3-6h5z" fill="#fff" stroke="#222" stroke-width=".8"/>
          <g fill="none" stroke="#a8d3d2" stroke-width=".9"><path d="M241 569 247 566 262 576 272 571 277 574 294 565 301 569 271 586ZM248 570 271 582 294 569M256 578l6-3M272 571l-8 5 8 5 8-5"/></g>
          <g fill="#9bb3d8" fill-opacity=".5" stroke="#9aa6b8"><path d="M1210.500 211.500h15v15h-15zM1210.500 229.500h15v15h-15zM1210.500 246.500h15v15h-15zM1193.500 229.500h14v15h-14zM1228.500 229.500h14v15h-14z"/></g>
          <g stroke="#6cb3ea" stroke-width="1.500"><path d="M1210 211h16M1210 262h16M1193 229v16M1243 229v16"/></g>
          <g fill="none" stroke="#b9c3d2" stroke-width="2"><path d="m1196 214 7 7M1204 215v8h-7M1240 214l-7 7M1232 215v8h7M1196 258l7-7M1204 257v-7h-7M1240 258l-7-7M1232 257v-7h7"/></g>
          <text x="1218" y="239" class="top">TOP</text>
        </svg>
      </div>
      <div class="mtitle"><span>Message Window</span><svg><use href="#pin"/></svg><svg><use href="#x"/></svg></div>
      <div class="mbody"><div class="mscroll"><svg><use href="#up"/></svg><svg><use href="#down"/></svg></div></div>
      <div class="prompt">&gt;&gt;</div>
      <div class="mtabs">
        <button class="step" aria-label="First"><svg viewBox="0 0 10 10"><path d="M2 1v8M8 1v8L4 5z" fill="#aaa" stroke="#aaa"/></svg></button><button class="step" aria-label="Previous"><svg viewBox="0 0 10 10"><path d="M7 1v8L3 5z" fill="#aaa"/></svg></button><button class="step" aria-label="Next"><svg viewBox="0 0 10 10"><path d="M3 1v8l4-4z" fill="#aaa"/></svg></button><button class="step" aria-label="Last"><svg viewBox="0 0 10 10"><path d="M8 1v8M2 1v8l4-4z" fill="#aaa" stroke="#aaa"/></svg></button>
        <div class="sheet"><svg viewBox="0 0 6 16"><path d="m0 0 5 16" stroke="#333"/></svg><button class="on">Command Message</button><svg viewBox="0 0 6 16"><path d="M6 0 1 16M2 0l4 14" stroke="#333" fill="none"/></svg><button>Analysis Message</button><svg viewBox="0 0 6 16"><path d="M6 0 1 16" stroke="#333"/></svg></div>
        <div class="mh"><svg><use href="#left"/></svg><i></i></div>
      </div>
    </section>

    <aside class="side">
      <i class="hgrip"></i><button><svg class="i"><use href="#g9"/></svg></button><button><svg class="i"><use href="#hash"/></svg></button>
      <i class="hgrip"></i><button><svg class="i"><use href="#r3"/></svg></button><button><svg class="i"><use href="#r4"/></svg></button><button class="on"><svg class="i"><use href="#r5"/></svg></button><button class="on"><svg class="i"><use href="#r6"/></svg></button><button><svg class="i"><use href="#r7"/></svg></button><button><svg class="i"><use href="#r8"/></svg></button>
      <i class="hgrip"></i><button><svg class="i"><use href="#z1"/></svg></button><button><svg class="i"><use href="#z2"/></svg></button><button><svg class="i"><use href="#z3"/></svg></button><button><svg class="i"><use href="#z4"/></svg></button><button><svg class="i"><use href="#z1"/></svg></button>
      <i class="hgrip"></i><button><svg class="i"><use href="#z6"/></svg></button><button><svg class="i"><use href="#hand"/></svg></button><button><svg class="i"><use href="#orb"/></svg></button>
      <i class="hgrip"></i><button><svg class="i"><use href="#w1"/></svg></button><button><svg class="i"><use href="#w2"/></svg></button><i class="hsep"></i>
      <button><svg class="i"><use href="#cubeb"/></svg></button><button><svg class="i"><use href="#cube"/></svg></button><button><svg class="i"><use href="#cube"/></svg></button><button><svg class="i"><use href="#cubeb"/></svg></button>
    </aside>
  </main>

  <footer class="status">
    <span class="s-help">For Help, press F1</span><span class="s-cell">Node-6</span><span class="s-cell s-u">U: 4, 4, 3</span><span class="s-cell s-g">G: 4, 4, 3</span>
    <div class="s-sel w37"><select aria-label="Force unit"><option>kN</option></select></div>
    <div class="s-sel w37"><select aria-label="Length unit"><option>m</option></select></div>
    <div class="s-tools">
      <button class="teal"><svg class="i"><use href="#proj"/></svg></button><button class="teal"><svg class="i"><use href="#na"/></svg></button><button class="teal"><svg viewBox="0 0 10 10"><path d="M3 1v8l5-4z" fill="#555"/></svg></button>
      <div class="s-sel w32"><select aria-label="Filter"><option>noi</option></select></div>
      <button class="teal q">?</button><i class="cyan"></i><span class="num">1</span><svg class="updown" viewBox="0 0 6 12"><path d="M1 4 3 2l2 2M1 8l2 2 2-2" fill="none" stroke="#666"/></svg><span class="num">/</span><span class="num last">2</span>
    </div>
  </footer>

  <div class="share">
    <button aria-label="Collapse"><svg viewBox="0 0 16 16"><path d="M1 3h14v10H1z" fill="#fb5b1b"/><path d="M12 8H5M8 5 5 8l3 3" fill="none" stroke="#fff" stroke-width="1.600"/></svg></button>
    <button aria-label="Mute"><svg viewBox="0 0 16 16"><circle cx="8" cy="8" r="8" fill="#f33618"/><path d="M7 3h2v6H7zM5 7q0 4 3 4t3-4M8 11v2M4 12 12 4" fill="none" stroke="#fff"/></svg></button>
    <button aria-label="Screens"><svg viewBox="0 0 16 16"><circle cx="8" cy="8" r="8" fill="#fff"/><path d="M4 4h6v5H4zM7 7h6v5H7z" fill="#fff" stroke="#333" stroke-width="1.200"/></svg></button>
    <button aria-label="Raise hand"><svg viewBox="0 0 16 16"><circle cx="8" cy="8" r="8" fill="#fff"/><path d="M5 9V4M7 8V3M9 8V3M11 9V4M4 9q1 4 4 4t4-4" fill="none" stroke="#345" stroke-width="1.200"/><path d="M7 8h2v3h2l-3 4-3-4h2z" fill="#1c9c5a"/></svg></button>
  </div>
  <div class="pause"><svg viewBox="0 0 60 34"><path d="M9 9h4v13H9zM16 9h4v13h-4z" fill="#aaa"/><path d="M37 8h16v13H37z" fill="none" stroke="#999"/><path d="m40 10 4 4-4 4" fill="none" stroke="#222" stroke-width="2"/></svg></div>
</div>
</body>
</html>
```

FILE: styles.css
```css
* { box-sizing: border-box; }
html, body { margin: 0; height: 100%; }
body { font: 10px/12px "Open Sans", "Noto Sans", sans-serif; color: #333; background: #555; overflow: hidden; }
button, input, select { font: inherit; color: inherit; margin: 0; padding: 0; border: 0; background: none; border-radius: 0; }
svg { display: block; flex: none; }
.defs { position: absolute; width: 0; height: 0; }
.i { width: 16px; height: 16px; }
.app { position: relative; display: flex; flex-direction: column; height: 100vh; }

/* title and tabs */
.head { display: grid; grid-template-columns: 43px 1fr; grid-template-rows: 22px 22px; background: #d6d6d6; border-bottom: 1px solid #c3312b; flex: none; }
.appbtn { grid-row: 1 / 3; margin-bottom: 2px; border: 1px solid #555; background: linear-gradient(#c9c9c9, #989898); display: grid; place-items: center; }
.appbtn svg { width: 27px; height: 27px; }
.titlebar { display: flex; align-items: center; min-width: 0; }
.quick { display: flex; align-items: center; height: 19px; width: 142px; margin: 1px 14px 0 0; border: 1px solid #777; background: #c4c4c4; }
.quick button { width: 20px; display: grid; place-items: center; }
.quick .i { width: 14px; height: 14px; }
.quick .more { margin-left: 4px; }
.quick .more svg { width: 8px; height: 8px; }
.title { flex: 1; margin: 0; font-size: 11px; line-height: 22px; font-weight: 400; color: #333; text-align: center; white-space: nowrap; overflow: hidden; }
.winctl { display: flex; }
.winctl button { width: 34px; display: grid; place-items: center; }
.winctl svg { width: 14px; height: 14px; }
.tabs { display: flex; background: #68686a; border-top: 1px solid #555; }
.tabs > button { padding: 0 10px 0 11px; color: #e2e2e2; line-height: 22px; }
.tabs > .on { color: #333; background: #f6f6f6; border: 1px solid #c3312b; border-bottom: 0; margin-top: 2px; line-height: 18px; padding: 0 10px; }
.help { margin-left: auto; display: flex; align-items: center; gap: 6px; color: #e8e8e8; padding-right: 17px; }
.help svg { width: 14px; height: 14px; }
.help .tiny { width: 6px; height: 6px; }

/* ribbon */
.ribbon { display: flex; gap: 2px; padding: 1px 0 2px 3px; height: 86px; flex: none; background: linear-gradient(#f7f7f7, #e4e4e4 50%, #bfbfbf); border-bottom: 1px solid #777; }
.group { display: flex; flex-direction: column; border-right: 1px solid #888; }
.gbody { flex: 1; display: flex; align-items: flex-start; padding-top: 5px; }
.glabel { height: 17px; line-height: 16px; background: #3b3b3b; color: #c8c8c8; text-align: center; }
.tool { display: flex; flex-direction: column; align-items: center; line-height: 11px; white-space: nowrap; }
.tool svg { width: 28px; height: 28px; margin-bottom: 5px; }
.w20 { width: 20px; } .w22 { width: 22px; } .w32 { width: 32px; } .w34 { width: 34px; } .w37 { width: 37px; } .w40 { width: 40px; } .w44 { width: 44px; } .w50 { width: 50px; }
.w53 { width: 53px; } .w60 { width: 60px; } .w91 { width: 91px; } .w106 { width: 106px; } .w115 { width: 115px; }
.vsep { width: 1px; height: 42px; margin-top: 7px; background: #aaa; }
.col { display: flex; flex-direction: column; padding-left: 2px; margin-top: -2px; }
.col button { display: flex; align-items: center; gap: 2px; height: 19px; white-space: nowrap; }
.col.w106 { padding-left: 4px; }
.mesh { padding-left: 3px; }
.caret { width: 10px; display: grid; place-items: center; }
.caret::after { content: ""; border: 2px solid transparent; border-top: 3px solid #666; border-bottom: 0; }

/* icon bars */
.bars { display: flex; height: 23px; background: linear-gradient(90deg, #4a4946, #5b5a59); flex: none; }
.second { height: 24px; padding: 1px 0 0 715px; }
.bar { display: flex; align-items: center; background: #d3d3d3; border-radius: 0 2px 2px 0; }
.bar:first-child { padding-right: 3px; }
.bar:last-child { padding-right: 2px; }
.bar button { width: 21px; height: 22px; display: grid; place-items: center; }
.bar .on { background: #8e8e8e; box-shadow: inset 0 0 0 1px #666; }
.bar .dark { color: #555; }
.bar .pale { color: #aaa; }
.grip { width: 8px; height: 14px; background: radial-gradient(circle, #555 1px, transparent 1px) 2px 0 / 4px 4px repeat-y; }
.bsep { width: 6px; height: 14px; background: linear-gradient(#888, #888) center / 1px 100% no-repeat; }
.combo { position: relative; width: 87px; height: 19px; margin: 0 1px; background: #fff; }
.combo select { width: 100%; height: 100%; appearance: none; }
.combo::after { content: ""; position: absolute; right: 0; top: 1px; width: 12px; height: 17px; background: conic-gradient(from -45deg at 50% 60%, #555 90deg, #bbb 0) center / 6px 4px no-repeat, #bbb; }

/* work area */
.work { flex: 1; display: flex; min-height: 0; background: #555; }
.tree { width: 227px; flex: none; display: flex; flex-direction: column; border-left: 1px solid #ccc; background: #505050; color: #333; border-top: 1px solid #aaa; }
.ptitle { display: flex; align-items: center; height: 19px; padding: 0 4px 0 2px; color: #d5d5d5; background: #585858; gap: 5px; }
.ptitle span, .mtitle span { flex: 1; }
.ptitle svg, .mtitle svg { width: 9px; height: 9px; color: #eee; }
.ptabs { display: flex; height: 20px; align-items: flex-end; padding-left: 1px; }
.ptabs button { padding: 0 4px; line-height: 18px; color: #ddd; }
.ptabs .on, .pfoot .on { background: #f0f0f0; color: #333; }
.ptabs .on { margin: 0 1px; padding: 0 3px; }
.pbody { flex: 1; display: grid; grid-template-columns: 1fr 17px; grid-template-rows: 1fr 17px; background: #f0f0f0; }
.form { padding: 4px 7px 0 10px; font-family: "DejaVu Sans Condensed", "DejaVu Sans", sans-serif; font-size: 9px; }
fieldset { margin: 0; padding: 3px 0 0; height: 208px; min-width: 0; border: 1px solid #ddd; }
legend { margin-left: 5px; padding: 0 1px; }
.radio { display: flex; align-items: center; gap: 3px; height: 19px; padding-left: 1px; }
.radio input { appearance: none; width: 12px; height: 12px; border: 1px solid #555; border-radius: 50%; background: #fff; }
.radio input:checked { background: radial-gradient(circle, #222 3px, #fff 4px); }
.frow { display: flex; align-items: center; height: 27px; padding-left: 11px; }
.frow.first { margin-top: 20px; }
.first label { width: 57px; }
.frow > input { width: 94px; height: 19px; border: 1px solid #6f8fc4; background: #fff; padding: 0 4px; }
.unit { margin: 5px 0 0 3px; }
.frow:not(.first) label { width: 107px; padding-left: 1px; }
.spin { display: flex; width: 45px; height: 18px; border: 1px solid #aaa; background: #fff; }
.spin input { width: 28px; padding-left: 4px; }
.spin > span { display: flex; flex-direction: column; flex: 1; gap: 1px; background: #aaa; border-left: 1px solid #bbb; }
.spin button { flex: 1; display: grid; place-items: center; background: #e4e4e4; }
.tri { border: 3px solid transparent; border-top: 3px solid #111; border-bottom: 0; }
.tri.up { border-top: 0; border-bottom: 3px solid #111; }
.btn { width: 54px; height: 18px; background: #e1e1e1; border: 1px solid #adadad; }
.btn.wide { width: 100%; margin-top: 5px; display: block; }
.btn.prim { border: 2px solid #2f7cc0; }
.actions { display: flex; justify-content: flex-end; gap: 14px; margin-top: 4px; padding-right: 1px; }
.vscroll { display: flex; flex-direction: column; align-items: center; padding: 4px 4px 4px 0; }
.vscroll svg, .hscroll svg { width: 9px; height: 9px; color: #555; }
.vscroll i { width: 14px; height: 208px; margin: auto 0 17px; background: #cdcdcd; }
.hscroll { display: flex; align-items: center; padding: 0 4px; gap: 5px; }
.hscroll i { flex: 1; height: 14px; background: #cdcdcd; }
.pfoot { display: flex; height: 21px; padding: 0 0 4px 1px; background: linear-gradient(#555, #3d3d3d); }
.pfoot button { padding: 0 3px; color: #ddd; line-height: 17px; }
.pfoot .on { margin-left: 2px; }

.center { flex: 1; min-width: 0; display: flex; flex-direction: column; margin-left: 4px; }
.doctabs { display: flex; align-items: center; height: 24px; flex: none; background: #d3d3d3; border-top: 1px solid #999; border-bottom: 1px solid #666; }
.nav { width: 10px; height: 10px; margin-left: 1px; }
.nav.end { margin: 0 7px 0 auto; }
.doctab { display: flex; align-items: center; align-self: stretch; margin-top: 1px; gap: 9px; padding: 0 7px 0 24px; background: #fff; clip-path: polygon(14px 0, 100% 0, 100% 100%, 0 100%); font-weight: 700; color: #222; margin-left: 1px; }
.doctab .i { width: 14px; height: 14px; }
.cx { width: 8px; height: 8px; color: #777; }
.view { flex: 1; min-height: 0; border: solid #fff; border-width: 1px 3px 3px 2px; background: linear-gradient(#a6b7d6, #7488aa); overflow: hidden; }
.scene { width: 100%; height: 100%; }
.top { font: 8px "Open Sans", sans-serif; text-anchor: middle; fill: #8595b0; }
.mtitle { display: flex; align-items: center; gap: 5px; height: 26px; padding: 2px 3px 2px 2px; color: #c8c8c8; background: #555; border-top: 1px solid #444; border-bottom: 3px solid #85847f; flex: none; }
.mbody { height: 46px; flex: none; background: #fefaf0; border: solid #777; border-width: 0 0 1px 1px; display: flex; justify-content: flex-end; margin-right: 1px; }
.mscroll { width: 16px; background: #f3f3f3; display: flex; flex-direction: column; justify-content: space-between; align-items: center; padding: 4px 0 5px; color: #aaa; }
.mscroll svg, .mh svg { width: 8px; height: 8px; }
.prompt { height: 15px; flex: none; line-height: 18px; padding-left: 3px; font-family: "Liberation Mono", monospace; font-size: 14px; background: #fefaf0; color: #444; }
.mtabs { display: flex; height: 18px; flex: none; padding-bottom: 1px; background: #f0f0f2; }
.step { width: 16px; display: grid; place-items: center; border: solid #888; border-width: 1px 1px 1px 0; background: #ececec; }
.step svg { width: 9px; height: 9px; }
.sheet { flex: 616; display: flex; border: solid #555; border-width: 1px 3px 0 0; font: 9px/15px "Liberation Sans", sans-serif; }
.sheet svg { width: 6px; height: 16px; }
.sheet button { padding: 0 7px; font-size: 8px; }
.sheet .on { font-weight: 700; font-size: 9px; padding: 0 2px; background: #fff; }
.mh { flex: 336; display: flex; align-items: center; padding-left: 5px; gap: 5px; color: #444; }
.mh i { width: 15px; height: 14px; background: #cdcdcd; }

.side { width: 25px; flex: none; background: #cfcfcf; border-left: 1px solid #888; display: flex; flex-direction: column; align-items: center; }
.side button { width: 22px; height: 21px; flex: none; display: grid; place-items: center; }
.side .on { background: #858585; box-shadow: inset 0 0 0 1px #666; }
.hgrip { width: 12px; height: 9px; background: radial-gradient(circle, #555 1px, transparent 1px) 0 2px / 4px 4px repeat-x; }
.hsep { width: 14px; height: 5px; background: linear-gradient(#888, #888) center / 100% 1px no-repeat; }

/* status */
.status { display: flex; height: 20px; flex: none; background: #272727; color: #ddd; line-height: 18px; border-bottom: 2px solid #999; }
.s-help { flex: 1; padding-left: 5px; }
.s-cell { width: 80px; padding-left: 7px; border-left: 1px solid #444; }
.s-cell + .s-cell { padding-left: 4px; }
.s-u { width: 170px; }
.s-g { width: 172px; }
.s-sel { background: #e4e4e4; color: #333; margin-right: 2px; }
.s-sel select { width: 100%; height: 17px; padding-left: 3px; appearance: none; background: linear-gradient(45deg, transparent 50%, #666 50%, #666 65%, transparent 65%) right 8px center / 4px 4px no-repeat, linear-gradient(-45deg, transparent 50%, #666 50%, #666 65%, transparent 65%) right 4px center / 4px 4px no-repeat; }
.s-tools { width: 200px; display: flex; align-items: center; gap: 4px; padding: 0 8px 0 4px; background: #efefef; color: #444; }
.s-tools .s-sel { margin: 0; background: #ddd; }
.teal { width: 13px; height: 14px; background: #a9c3c3; display: grid; place-items: center; }
.teal svg { width: 11px; height: 11px; }
.teal.q { border: 1px solid #35c5cd; background: #e6ffff; font-weight: 700; line-height: 12px; color: #222; margin-left: 2px; }
.cyan { width: 12px; height: 13px; background: #00e5ff; }
.num { width: 10px; text-align: center; }
.last { margin-left: 3px; }
.updown { width: 6px; height: 12px; }

/* overlays */
.share { position: absolute; right: 0; top: 31px; width: 24px; background: #47506a; border: solid #212a3f; border-width: 7px 0; height: 123px; }
.share button { width: 24px; height: 24px; display: grid; place-items: center; border-bottom: 1px solid #707990; }
.share button:first-child { height: 15px; }
.share svg { width: 16px; height: 16px; }
.pause { position: absolute; right: 15px; bottom: 12px; width: 60px; height: 32px; background: rgba(70, 70, 70, .5); }
```
